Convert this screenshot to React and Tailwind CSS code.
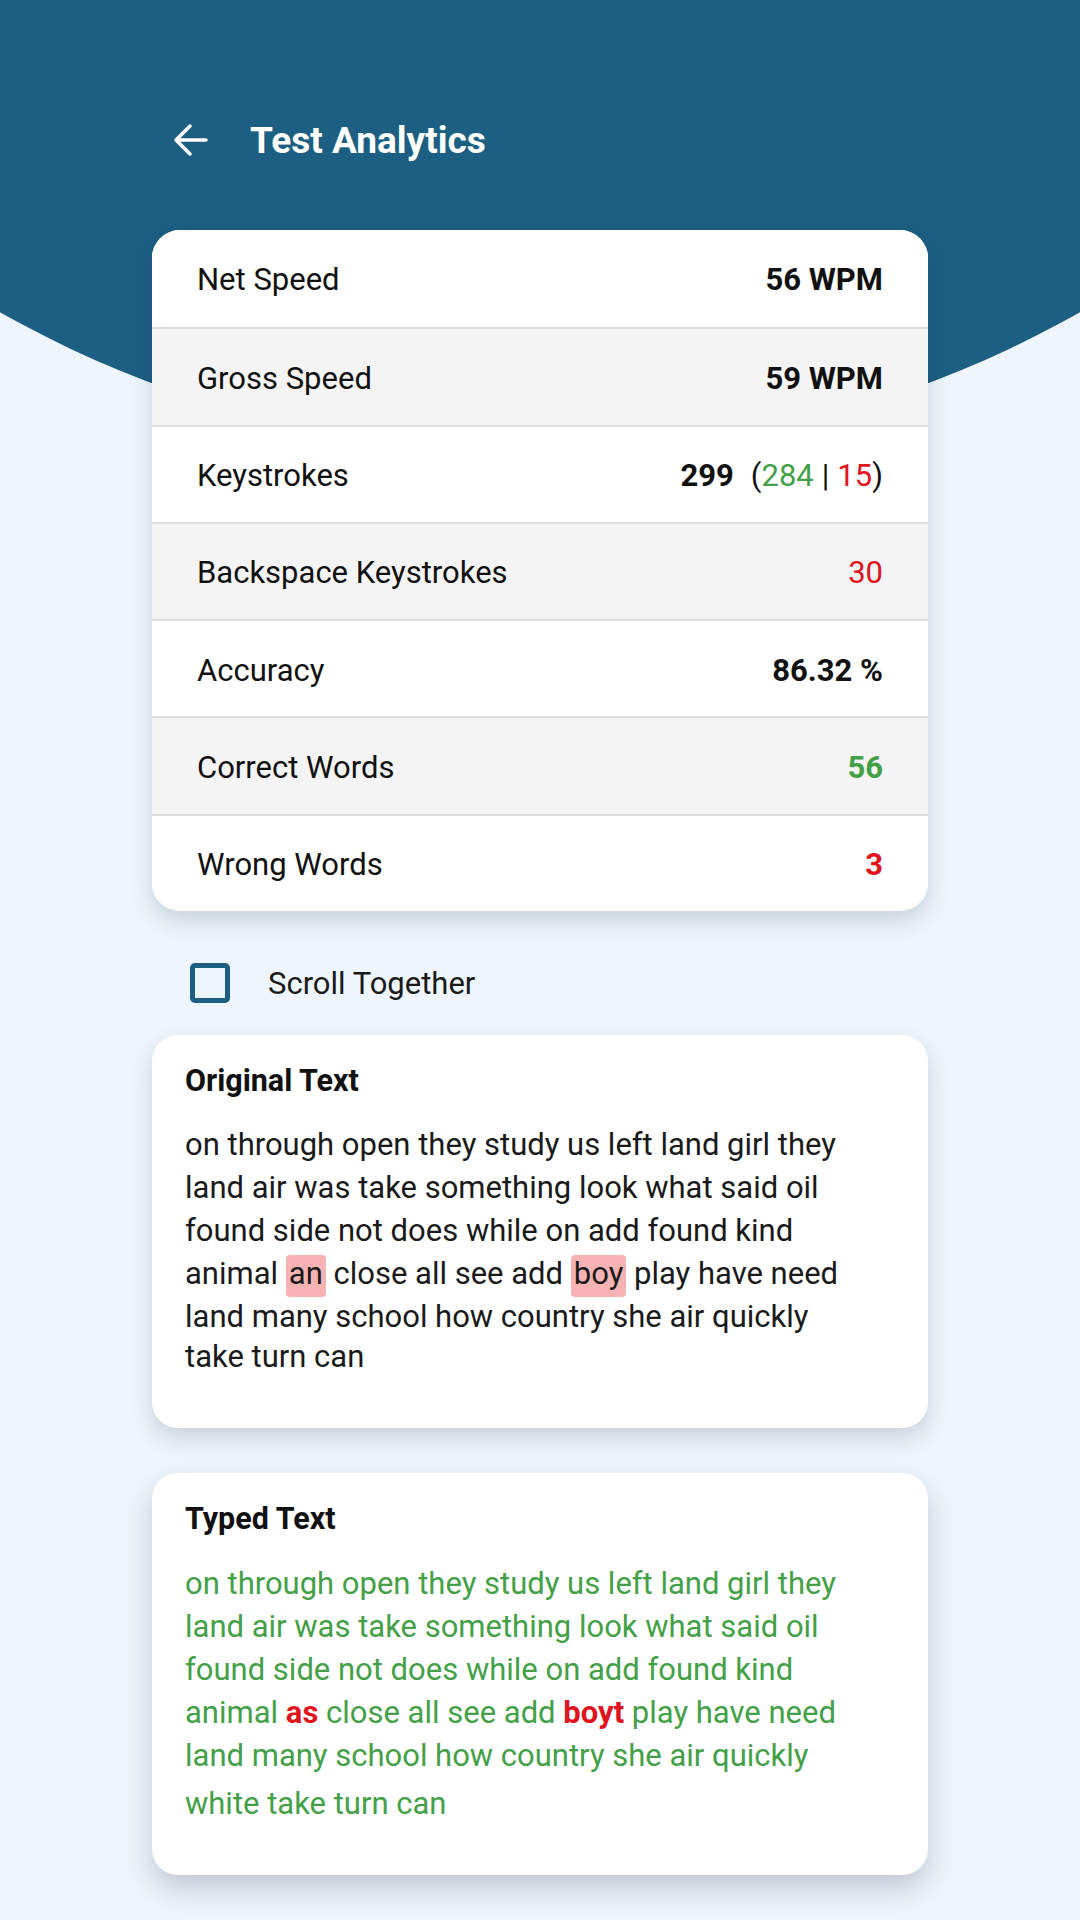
import React from "react";

const FONT = { fontFamily: "Roboto, 'Noto Sans', 'Liberation Sans', sans-serif" };

const GREEN = "text-[#43a047]";
const RED = "text-[#e0141e]";

function Row({ label, children, shaded, first }) {
  return (
    <div
      className={`flex items-center justify-between h-[97.3px] pl-[45px] pr-[45px] pt-[4px] text-[31px] text-[#111111] ${
        shaded ? "bg-[#f4f4f4]" : "bg-white"
      } ${first ? "" : "border-t-2 border-[#dddddd]"}`}
    >
      <span>{label}</span>
      <span className="flex items-center">{children}</span>
    </div>
  );
}

const originalLines = [
  "on through open they study us left land girl they",
  "land air was take something look what said oil",
  "found side not does while on add found kind",
  null,
  "land many school how country she air quickly",
];

function Hl({ children }) {
  return (
    <span className="bg-[#f7b3b3] rounded-[4px] px-[3px] pb-[5px]">{children}</span>
  );
}

export default function App() {
  return (
    <div
      className="relative w-[1080px] h-[1920px] overflow-hidden bg-[#eef5fc]"
      style={FONT}
    >
      <div className="absolute left-[-560px] top-[-1746px] w-[2200px] h-[2200px] rounded-full bg-[#1c5f82]" />

      <div className="relative flex flex-col">
        {/* header */}
        <div className="flex items-center h-[44px] mt-[118px] pl-[173px] gap-[42px]">
          <svg width="35" height="34" viewBox="0 0 35 34" fill="none">
            <path
              d="M33 17H3M17 3L3 17L17 31"
              stroke="white"
              strokeWidth="3.5"
              strokeLinecap="round"
              strokeLinejoin="round"
            />
          </svg>
          <span className="text-white font-bold text-[37px] leading-none">Test Analytics</span>
        </div>

        {/* stats card */}
        <div className="mx-[152px] mt-[68px] rounded-[28px] overflow-hidden bg-white shadow-[0_10px_22px_rgba(30,50,80,0.18)]">
          <Row label="Net Speed" first>
            <span className="font-bold">56 WPM</span>
          </Row>
          <Row label="Gross Speed" shaded>
            <span className="font-bold">59 WPM</span>
          </Row>
          <Row label="Keystrokes">
            <span className="font-bold">299</span>
            <span className="ml-[17px]">(</span>
            <span className={GREEN}>284</span>
            <span className="mx-[8px]">|</span>
            <span className={RED}>15</span>
            <span>)</span>
          </Row>
          <Row label="Backspace Keystrokes" shaded>
            <span className={RED}>30</span>
          </Row>
          <Row label="Accuracy">
            <span className="font-bold">86.32 %</span>
          </Row>
          <Row label="Correct Words" shaded>
            <span className={`font-bold ${GREEN}`}>56</span>
          </Row>
          <Row label="Wrong Words">
            <span className={`font-bold ${RED}`}>3</span>
          </Row>
        </div>

        {/* checkbox */}
        <div className="flex items-center mt-[52px] ml-[190px] gap-[38px]">
          <div className="w-[40px] h-[40px] rounded-[5px] border-[5px] border-[#1c5f82]" />
          <span className="text-[31px] text-[#1a1a1a] leading-none">Scroll Together</span>
        </div>

        {/* original text card */}
        <div className="mx-[152px] mt-[32px] rounded-[26px] bg-white pl-[33px] pr-[30px] pt-[28px] pb-[50px] shadow-[0_10px_22px_rgba(30,50,80,0.18)]">
          <div className="text-[30.5px] font-bold leading-[36px] text-[#111111]">Original Text</div>
          <div className="mt-[24px] text-[31px] leading-[43px] text-[#1a1a1a] whitespace-nowrap">
            {originalLines.map((l, i) =>
              l === null ? (
                <div key={i}>
                  animal <Hl>an</Hl> close all see add <Hl>boy</Hl> play have need
                </div>
              ) : (
                <div key={i}>{l}</div>
              )
            )}
            <div className="mt-[-3px]">take turn can</div>
          </div>
        </div>

        {/* typed text card */}
        <div className="mx-[152px] mt-[45px] rounded-[26px] bg-white pl-[33px] pr-[30px] pt-[28px] pb-[50px] shadow-[0_14px_28px_rgba(30,50,80,0.22)]">
          <div className="text-[30.5px] font-bold leading-[36px] text-[#111111]">Typed Text</div>
          <div className={`mt-[25px] text-[31px] leading-[43px] whitespace-nowrap ${GREEN}`}>
            <div>on through open they study us left land girl they</div>
            <div>land air was take something look what said oil</div>
            <div>found side not does while on add found kind</div>
            <div>
              animal <span className={`font-bold ${RED}`}>as</span> close all see add{" "}
              <span className={`font-bold ${RED}`}>boyt</span> play have need
            </div>
            <div>land many school how country she air quickly</div>
            <div className="mt-[5px]">white take turn can</div>
          </div>
        </div>
      </div>
    </div>
  );
}
